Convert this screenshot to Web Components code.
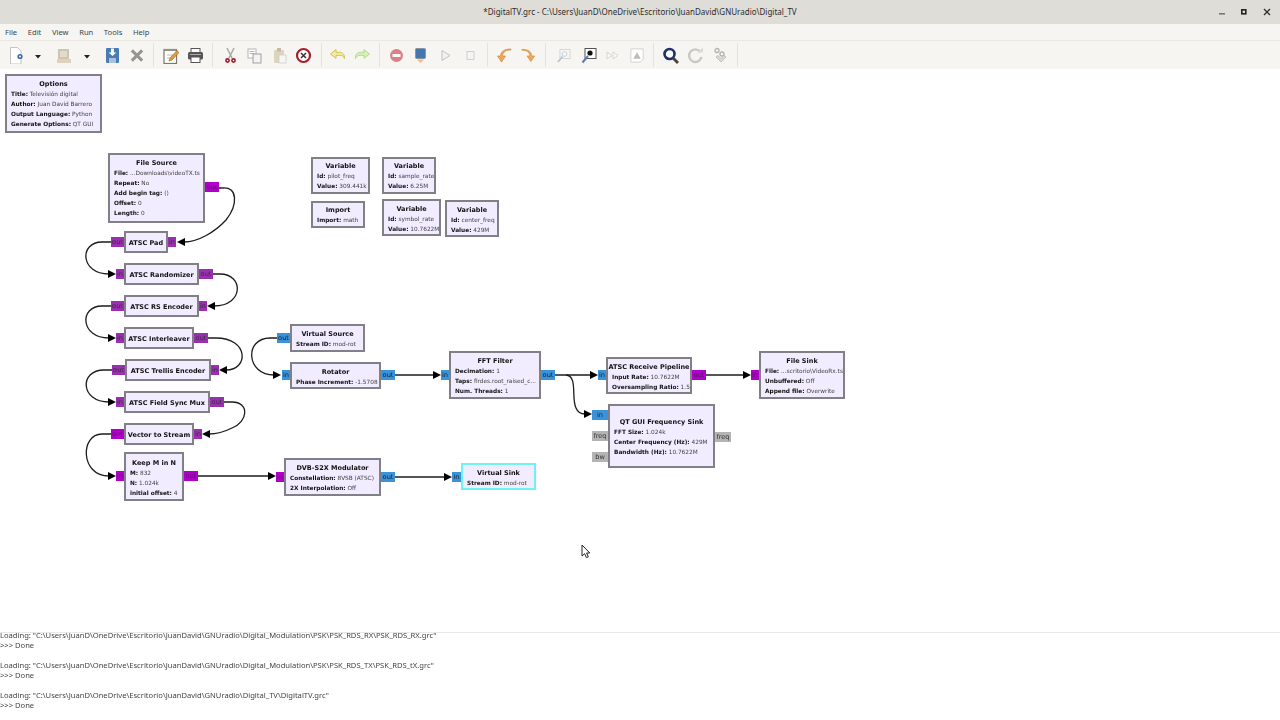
<!DOCTYPE html>
<html>
<head>
<meta charset="utf-8">
<title>DigitalTV.grc</title>
<style>
    html, body { margin: 0; height: 100%; background: #fff; overflow: hidden; }
    body { display: flex; flex-direction: column; width: 1280px; height: 720px; font-family: "Noto Sans", sans-serif; }
</style>
</head>
<body>
<grc-titlebar>*DigitalTV.grc - C:\Users\JuanD\OneDrive\Escritorio\JuanDavid\GNUradio\Digital_TV</grc-titlebar>
<grc-menubar></grc-menubar>
<grc-toolbar></grc-toolbar>
<grc-canvas>
    <grc-block x="5" y="74" w="97" h="59" title="Options" lift>
        <grc-param name="Title">Televisión digital</grc-param>
        <grc-param name="Author">Juan David Barrero</grc-param>
        <grc-param name="Output Language">Python</grc-param>
        <grc-param name="Generate Options">QT GUI</grc-param>
    </grc-block>

    <grc-block x="108" y="153" w="97" h="70" title="File Source" lift>
        <grc-param name="File">...Downloads\videoTX.ts</grc-param>
        <grc-param name="Repeat">No</grc-param>
        <grc-param name="Add begin tag">()</grc-param>
        <grc-param name="Offset">0</grc-param>
        <grc-param name="Length">0</grc-param>
        <grc-port slot="ports" side="right" top="29" w="14" kind="bright">out</grc-port>
    </grc-block>

    <grc-block x="124" y="231" w="44" h="22" title="ATSC Pad">
        <grc-port slot="ports" side="left" top="6" w="13" kind="byte">out</grc-port>
        <grc-port slot="ports" side="right" top="6" w="8" kind="byte">in</grc-port>
    </grc-block>
    <grc-block x="124" y="263" w="75" h="22" title="ATSC Randomizer">
        <grc-port slot="ports" side="left" top="6" w="8" kind="byte">in</grc-port>
        <grc-port slot="ports" side="right" top="6" w="14" kind="byte">out</grc-port>
    </grc-block>
    <grc-block x="124" y="295" w="75" h="22" title="ATSC RS Encoder">
        <grc-port slot="ports" side="left" top="6" w="13" kind="byte">out</grc-port>
        <grc-port slot="ports" side="right" top="6" w="8" kind="byte">in</grc-port>
    </grc-block>
    <grc-block x="124" y="327" w="70" h="22" title="ATSC Interleaver">
        <grc-port slot="ports" side="left" top="6" w="8" kind="byte">in</grc-port>
        <grc-port slot="ports" side="right" top="6" w="14" kind="byte">out</grc-port>
    </grc-block>
    <grc-block x="125" y="359" w="86" h="22" title="ATSC Trellis Encoder">
        <grc-port slot="ports" side="left" top="6" w="13" kind="byte">out</grc-port>
        <grc-port slot="ports" side="right" top="6" w="8" kind="byte">in</grc-port>
    </grc-block>
    <grc-block x="124" y="391" w="86" h="22" title="ATSC Field Sync Mux">
        <grc-port slot="ports" side="left" top="6" w="8" kind="byte">in</grc-port>
        <grc-port slot="ports" side="right" top="6" w="14" kind="byte">out</grc-port>
    </grc-block>
    <grc-block x="124" y="423" w="70" h="22" title="Vector to Stream">
        <grc-port slot="ports" side="left" top="6" w="13" kind="bright">out</grc-port>
        <grc-port slot="ports" side="right" top="6" w="8" kind="byte">in</grc-port>
    </grc-block>
    <grc-block x="124" y="452" w="60" h="49" title="Keep M in N">
        <grc-param name="M">832</grc-param>
        <grc-param name="N">1.024k</grc-param>
        <grc-param name="initial offset">4</grc-param>
        <grc-port slot="ports" side="left" top="19" w="8" kind="bright">in</grc-port>
        <grc-port slot="ports" side="right" top="19" w="14" kind="bright">out</grc-port>
    </grc-block>

    <grc-block x="311" y="157" w="59" h="37" title="Variable" lift>
        <grc-param name="Id">pilot_freq</grc-param>
        <grc-param name="Value">309.441k</grc-param>
    </grc-block>
    <grc-block x="382" y="157" w="54" h="37" title="Variable" lift>
        <grc-param name="Id">sample_rate</grc-param>
        <grc-param name="Value">6.25M</grc-param>
    </grc-block>
    <grc-block x="311" y="201" w="54" h="27" title="Import" lift>
        <grc-param name="Import">math</grc-param>
    </grc-block>
    <grc-block x="382" y="199" w="59" h="37" title="Variable">
        <grc-param name="Id">symbol_rate</grc-param>
        <grc-param name="Value">10.7622M</grc-param>
    </grc-block>
    <grc-block x="445" y="200" w="54" h="37" title="Variable">
        <grc-param name="Id">center_freq</grc-param>
        <grc-param name="Value">429M</grc-param>
    </grc-block>

    <grc-block x="290" y="324" w="75" h="28" title="Virtual Source">
        <grc-param name="Stream ID">mod-rot</grc-param>
        <grc-port slot="ports" side="left" top="9" w="13" kind="complex">out</grc-port>
    </grc-block>
    <grc-block x="290" y="362" w="91" h="27" title="Rotator">
        <grc-param name="Phase Increment">-1.5708</grc-param>
        <grc-port slot="ports" side="left" top="8" w="8" kind="complex">in</grc-port>
        <grc-port slot="ports" side="right" top="8" w="14" kind="complex">out</grc-port>
    </grc-block>
    <grc-block x="449" y="351" w="92" h="48" title="FFT Filter">
        <grc-param name="Decimation">1</grc-param>
        <grc-param name="Taps">firdes.root_raised_c...</grc-param>
        <grc-param name="Num. Threads">1</grc-param>
        <grc-port slot="ports" side="left" top="19" w="8" kind="complex">in</grc-port>
        <grc-port slot="ports" side="right" top="19" w="14" kind="complex">out</grc-port>
    </grc-block>
    <grc-block x="606" y="357" w="86" h="37" title="ATSC Receive Pipeline">
        <grc-param name="Input Rate">10.7622M</grc-param>
        <grc-param name="Oversampling Ratio">1.5</grc-param>
        <grc-port slot="ports" side="left" top="13" w="8" kind="complex">in</grc-port>
        <grc-port slot="ports" side="right" top="13" w="14" kind="bright">out</grc-port>
    </grc-block>
    <grc-block x="759" y="351" w="86" h="48" title="File Sink">
        <grc-param name="File">...scritorio\VideoRx.ts</grc-param>
        <grc-param name="Unbuffered">Off</grc-param>
        <grc-param name="Append file">Overwrite</grc-param>
        <grc-port slot="ports" side="left" top="19" w="8" kind="bright">in</grc-port>
    </grc-block>
    <grc-block x="608" y="404" w="107" h="64" title="QT GUI Frequency Sink">
        <grc-param name="FFT Size">1.024k</grc-param>
        <grc-param name="Center Frequency (Hz)">429M</grc-param>
        <grc-param name="Bandwidth (Hz)">10.7622M</grc-param>
        <grc-port slot="ports" side="left" top="6" w="16" kind="complex">in</grc-port>
        <grc-port slot="ports" side="left" top="27" w="16" kind="msg">freq</grc-port>
        <grc-port slot="ports" side="left" top="48" w="16" kind="msg">bw</grc-port>
        <grc-port slot="ports" side="right" top="28" w="16" kind="msg">freq</grc-port>
    </grc-block>

    <grc-block x="284" y="458" w="97" h="38" title="DVB-S2X Modulator">
        <grc-param name="Constellation">8VSB (ATSC)</grc-param>
        <grc-param name="2X Interpolation">Off</grc-param>
        <grc-port slot="ports" side="left" top="14" w="8" kind="bright">in</grc-port>
        <grc-port slot="ports" side="right" top="14" w="14" kind="complex">out</grc-port>
    </grc-block>
    <grc-block x="461" y="463" w="75" h="27" title="Virtual Sink" selected>
        <grc-param name="Stream ID">mod-rot</grc-param>
        <grc-port slot="ports" side="left" top="9" w="9" kind="complex">in</grc-port>
    </grc-block>

    <grc-wire slot="wires" d="M218 188 H222 C238 186 238 205 226 220 C215 232 198 242 184 242" tip="177,242,left"></grc-wire>
    <grc-wire slot="wires" d="M111 242 H102 C79 242 80 274 109 274" tip="116,274,right"></grc-wire>
    <grc-wire slot="wires" d="M213 274 H220 C244 274 244 306 214 306" tip="207,306,left"></grc-wire>
    <grc-wire slot="wires" d="M111 306 H102 C79 306 80 338 109 338" tip="116,338,right"></grc-wire>
    <grc-wire slot="wires" d="M208 338 H216 C249 338 249 370 226 370" tip="219,370,left"></grc-wire>
    <grc-wire slot="wires" d="M112 370 H104 C79 370 80 402 109 402" tip="116,402,right"></grc-wire>
    <grc-wire slot="wires" d="M224 402 H232 C250 402 248 422 232 428 C224 432 216 434 209 434" tip="202,434,left"></grc-wire>
    <grc-wire slot="wires" d="M111 434 H102 C80 434 80 476 109 476" tip="116,476,right"></grc-wire>
    <grc-wire slot="wires" d="M197 476 H269" tip="276,476,right"></grc-wire>
    <grc-wire slot="wires" d="M395 477 H445" tip="452,477,right"></grc-wire>
    <grc-wire slot="wires" d="M277 338 H270 C244 338 246 375 274 375" tip="281,375,right"></grc-wire>
    <grc-wire slot="wires" d="M395 375 H434" tip="441,375,right"></grc-wire>
    <grc-wire slot="wires" d="M555 375 H591" tip="598,375,right"></grc-wire>
    <grc-wire slot="wires" d="M566 375 C578 376 571 398 576 408 C578 413 582 414 585 414" tip="592,414,right"></grc-wire>
    <grc-wire slot="wires" d="M706 375 H744" tip="751,375,right"></grc-wire>

    <grc-pointer slot="overlay" x="581" y="542"></grc-pointer>
</grc-canvas>
<grc-log>
    <div>Loading: "C:\Users\JuanD\OneDrive\Escritorio\JuanDavid\GNUradio\Digital_Modulation\PSK\PSK_RDS_RX\PSK_RDS_RX.grc"</div>
    <div>&gt;&gt;&gt; Done</div>
    <div>&nbsp;</div>
    <div>Loading: "C:\Users\JuanD\OneDrive\Escritorio\JuanDavid\GNUradio\Digital_Modulation\PSK\PSK_RDS_TX\PSK_RDS_tX.grc"</div>
    <div>&gt;&gt;&gt; Done</div>
    <div>&nbsp;</div>
    <div>Loading: "C:\Users\JuanD\OneDrive\Escritorio\JuanDavid\GNUradio\Digital_TV\DigitalTV.grc"</div>
    <div>&gt;&gt;&gt; Done</div>
    <div>&nbsp;</div>
</grc-log>

<script>
const CANVAS_TOP = 69;

class GrcTitlebar extends HTMLElement {
    constructor() {
        super();
        this.attachShadow({ mode: 'open' });
        this.shadowRoot.innerHTML = `
            <style>
                :host { display: flex; flex: none; height: 24px; background: #dfddd8; align-items: center; color: #2c2c2c; }
                .title { flex: 1; text-align: center; font: 8px "Noto Sans", sans-serif; white-space: nowrap; margin-top: -1px; }
                .controls { display: flex; position: absolute; right: 2px; top: 0; height: 24px; align-items: center; }
                .controls span { width: 22.5px; display: flex; justify-content: center; }
            </style>
            <div class="title"><slot></slot></div>
            <div class="controls">
                <span><svg width="8" height="8" viewBox="0 0 8 8"><rect x="1" y="5" width="6" height="1.6" fill="#777"/></svg></span>
                <span><svg width="8" height="8" viewBox="0 0 8 8"><rect x="1.8" y="1.8" width="4" height="4" fill="none" stroke="#222" stroke-width="1.6"/></svg></span>
                <span><svg width="8" height="8" viewBox="0 0 8 8"><path d="M1 1L7 7M7 1L1 7" stroke="#333" stroke-width="1.4"/></svg></span>
            </div>
        `;
    }
}

class GrcMenubar extends HTMLElement {
    constructor() {
        super();
        this.attachShadow({ mode: 'open' });
        const items = ['File', 'Edit', 'View', 'Run', 'Tools', 'Help'];
        this.shadowRoot.innerHTML = `
            <style>
                :host { display: flex; flex: none; height: 16px; box-sizing: border-box; background: #f6f5f1; padding: 0 0 0 5px; gap: 10.6px; align-items: center; font: 7.6px "Noto Sans", sans-serif; color: #444; }
            </style>
            ${items.map(i => `<span>${i}</span>`).join('')}
        `;
    }
}

const ICONS = {
    drop: '<path d="M5 8h6l-3 3.4z" fill="#222"/>',
    new: '<path d="M3.5 .5h7l3.5 3.5v13h-10.5z" fill="#fff" stroke="#c4c4c4"/><circle cx="13" cy="9.5" r="2.6" fill="#3b67a8"/><circle cx="13" cy="9.5" r="1" fill="#fff"/>',
    open: '<path d="M3 2h11v11h-11z" fill="#cfc4ae"/><path d="M5 4h7v6h-7z" fill="#e2dbcc"/><path d="M2 12h14v4h-14z" fill="#ddd2bd"/>',
    save: '<rect x="2" y="1" width="13" height="15" rx="1" fill="#4a7cb3"/><path d="M7 1.5h3v4h2.4l-3.9 3.5-3.9-3.5h2.400z" fill="#fff"/><rect x="5" y="11" width="7" height="5" fill="#a9c2dc"/>',
    close: '<path d="M3 3L14 14M14 3L3 14" stroke="#96968f" stroke-width="3.2"/>',
    editor: '<rect x="2" y="2.5" width="12.5" height="14" fill="#fff" stroke="#7b786f" stroke-width="1.2"/><rect x="2" y="2" width="12.5" height="2" fill="#95928a"/><path d="M5 8h6M5 11h4" stroke="#bbb"/><path d="M7 14l1-3 7-7.5 2 2-7 7.5z" fill="#e39a3a" stroke="#8a5a1c" stroke-width=".5"/>',
    print: '<rect x="4" y="1.5" width="9" height="4" fill="#fff" stroke="#555"/><rect x="1" y="5" width="15" height="7.5" rx="1.5" fill="#555"/><rect x="4" y="10" width="9" height="5.5" fill="#fff" stroke="#555"/><path d="M3 7.5h11" stroke="#aaa"/>',
    cut: '<path d="M5 1l5 10M12 1l-5 10" stroke="#a9a9a6" stroke-width="1.5"/><circle cx="5.5" cy="13.5" r="2.4" fill="#a21e2c"/><circle cx="11.5" cy="13.5" r="2.4" fill="#a21e2c"/><circle cx="5.5" cy="13.5" r=".8" fill="#fff"/><circle cx="11.5" cy="13.5" r=".8" fill="#fff"/>',
    copy: '<rect x="2" y="2" width="8" height="9" fill="#fff" stroke="#b4b4b4"/><path d="M3.5 4.5h5M3.5 6.5h5" stroke="#bbb"/><rect x="7" y="7" width="8" height="9" fill="#f3f3f3" stroke="#a0a0a0"/>',
    paste: '<rect x="3" y="3" width="10" height="13" rx="1" fill="#ded3bc"/><rect x="6" y="1" width="4" height="3.5" fill="#c6bca5"/><rect x="8" y="8" width="7" height="8" fill="#f6f6f6" stroke="#c9c9c9" stroke-width=".7"/>',
    error: '<circle cx="8.5" cy="8.5" r="6.5" fill="#fff" stroke="#a51d2e" stroke-width="2.2"/><path d="M6 6l5 5M11 6l-5 5" stroke="#333" stroke-width="1.5"/>',
    undo: '<path d="M1.500 7L7 2.500v2.800h3.500c3.500 0 5 2.200 5 6.200-1-2.400-2.500-3.200-5-3.200h-3.500v3z" fill="#f4ec9e" stroke="#d3c056"/>',
    redo: '<path d="M15.500 7L10 2.500v2.800h-3.500c-3.500 0-5 2.200-5 6.200 1-2.400 2.500-3.200 5-3.200h3.500v3z" fill="#d6f2b4" stroke="#aedb92"/>',
    stop: '<circle cx="8.5" cy="8.5" r="6.5" fill="#dc7f89"/><rect x="4.5" y="7" width="8" height="3" fill="#fff"/>',
    gen: '<rect x="3.5" y="1.5" width="10" height="10" rx="1" fill="#4576b0" stroke="#8896a4"/><path d="M5 12.5h7l-3.5 3.5z" fill="#eabd8f"/>',
    exec: '<path d="M5 3.5L13 8.5L5 13.5z" fill="#f2f2f0" stroke="#c0c0bd"/>',
    kill: '<rect x="5" y="4.5" width="7" height="8" fill="#f4f4f2" stroke="#d0d0cd"/>',
    rewind: '<path d="M15 2.500c-5 0-8 1.500-8.500 6h3l-4 6-4-6h3c.5-5 4-7 10.500-7z" transform="translate(1 .5)" fill="#efa75a" stroke="#d58a40" stroke-width=".7"/>',
    forward: '<path d="M2 2.500c5 0 8 1.500 8.500 6h-3l4 6 4-6h-3c-.5-5-4-7-10.500-7z" transform="translate(-1 .5)" fill="#efa75a" stroke="#d58a40" stroke-width=".7"/>',
    findin: '<rect x="5" y="2.500" width="10" height="9" fill="#f7f7f5" stroke="#d6d6d3"/><circle cx="9.500" cy="7" r="2.400" fill="none" stroke="#c2d0df"/><path d="M7.500 9.500L3 15" stroke="#b2c5da" stroke-width="1.800"/>',
    findon: '<rect x="5" y="1.500" width="11" height="10" fill="#fff" stroke="#555"/><circle cx="10" cy="6" r="2.600" fill="#111"/><path d="M8 9L2.500 15.500" stroke="#5a7cae" stroke-width="2"/>',
    next: '<path d="M3 5l5 3.500-5 3.500zM9 5l5 3.500-5 3.500z" fill="#f8f8f6" stroke="#d6d6d3"/>',
    warn: '<path d="M2 1.500h13v11l-3 3h-10z" fill="#fff" stroke="#d0d0cd"/><path d="M8.500 5l4 7h-8z" fill="#bcbcb9"/>',
    search: '<circle cx="7.5" cy="7" r="5" fill="#fff" stroke="#1f2f6f" stroke-width="2.6"/><path d="M11 11l5 5" stroke="#444" stroke-width="2.8"/>',
    reload: '<path d="M13.500 5a6.300 6.300 0 1 0 1 5" fill="none" stroke="#c8c8c5" stroke-width="2.400"/><path d="M10 5.500h6v-5z" fill="#dadad7"/>',
    link: '<circle cx="5" cy="3.500" r="2" fill="none" stroke="#b2b2af" stroke-width="1.300"/><circle cx="10" cy="7" r="2" fill="none" stroke="#b2b2af" stroke-width="1.300"/><path d="M4 10l5 5 5-5-2-1.500-3 3-3-3z" fill="#d8d8d5" stroke="#b2b2af" stroke-width=".7"/>',
};

class GrcToolbar extends HTMLElement {
    constructor() {
        super();
        this.attachShadow({ mode: 'open' });
        // [icon, centre x in the bar]
        const items = [['new', 15], ['drop', 38], ['open', 63], ['drop', 87], ['save', 112], ['close', 137], ['|', 153],
            ['editor', 170], ['print', 195], ['|', 212], ['cut', 230], ['copy', 254], ['paste', 279], ['error', 303], ['|', 321],
            ['undo', 337], ['redo', 362], ['|', 379], ['stop', 396], ['gen', 420], ['exec', 445], ['kill', 470], ['|', 487],
            ['rewind', 503], ['forward', 529], ['|', 545], ['findin', 563], ['findon', 588], ['next', 612], ['warn', 637], ['|', 653],
            ['search', 670], ['reload', 695], ['link', 720], ['|', 737]];
        let left = 0;
        const cells = items.map(([name, c], i) => {
            const next = items[i + 1] ? items[i + 1][1] : c + 10;
            const right = (c + next) / 2;
            const width = right - left;
            const start = left;
            left = right;
            const pad = c - start - width / 2;
            if (name === '|') return `<span style="width:${width}px"><i style="margin-left:${pad * 2}px"></i></span>`;
            return `<span style="width:${width}px"><svg style="margin-left:${pad * 2}px" width="17" height="17" viewBox="0 0 17 17">${ICONS[name]}</svg></span>`;
        }).join('');
        this.shadowRoot.innerHTML = `
            <style>
                :host { display: flex; flex: none; height: 29px; box-sizing: border-box; background: #f6f5f1; border-top: 1px solid #e9e8e3; align-items: center; filter: blur(.4px); }
                span { display: flex; justify-content: center; align-items: center; flex: none; height: 100%; }
                i { display: block; width: 1px; height: 24px; background: #e3e2dd; }
            </style>
            ${cells}
        `;
    }
}

class GrcCanvas extends HTMLElement {
    constructor() {
        super();
        this.attachShadow({ mode: 'open' });
        this.shadowRoot.innerHTML = `
            <style>
                :host { display: block; flex: 1; position: relative; background: #fff; overflow: hidden; filter: blur(.4px); }
            </style>
            <slot name="wires"></slot>
            <slot></slot>
            <slot name="overlay"></slot>
        `;
    }
}

class GrcBlock extends HTMLElement {
    constructor() {
        super();
        this.attachShadow({ mode: 'open' });
        this.shadowRoot.innerHTML = `
            <style>
                :host { display: flex; flex-direction: column; justify-content: center; position: absolute; box-sizing: border-box; background: #f1ecff; border: 2px solid #808086; color: #111; padding: 2px 4px 0; }
                :host([lift]) { padding-top: 0; }
                :host([selected]) { border-color: #6ff2f2; }
                .title { text-align: center; font: bold 6.5px/10px "DejaVu Sans", sans-serif; white-space: nowrap; margin: 0 -6px; }
            </style>
            <div class="title"></div>
            <slot></slot>
            <slot name="ports"></slot>
        `;
    }

    connectedCallback() {
        const n = a => this.getAttribute(a);
        this.style.left = n('x') + 'px';
        this.style.top = (n('y') - CANVAS_TOP) + 'px';
        this.style.width = n('w') + 'px';
        this.style.height = n('h') + 'px';
        this.shadowRoot.querySelector('.title').textContent = n('title');
    }
}

class GrcParam extends HTMLElement {
    constructor() {
        super();
        this.attachShadow({ mode: 'open' });
        this.shadowRoot.innerHTML = `
            <style>
                :host { display: block; font: 5.8px/10px "DejaVu Sans", sans-serif; color: #444; white-space: nowrap; }
                b { color: #111; }
            </style>
            <b></b> <slot></slot>
        `;
    }

    connectedCallback() {
        this.shadowRoot.querySelector('b').textContent = this.getAttribute('name') + ':';
    }
}

class GrcPort extends HTMLElement {
    constructor() {
        super();
        this.attachShadow({ mode: 'open' });
        this.shadowRoot.innerHTML = `
            <style>
                :host { display: block; position: absolute; height: 10px; box-sizing: border-box; font: 6.6px/10px "DejaVu Sans", sans-serif; text-align: center; overflow: hidden; color: #333; background: #9a2fb0; }
                :host([kind="bright"]) { background: #b000c8; color: #5a1070; }
                :host([kind="complex"]) { background: #3a93d8; color: #123; }
                :host([kind="msg"]) { background: #b4b4b4; color: #333; }
            </style>
            <slot></slot>
        `;
    }

    connectedCallback() {
        const w = +this.getAttribute('w');
        const outside = -(w + 2);
        this.style.width = w + 'px';
        this.style.top = (this.getAttribute('top') - 2) + 'px';
        this.style[this.getAttribute('side')] = outside + 'px';
    }
}

class GrcWire extends HTMLElement {
    constructor() {
        super();
        this.attachShadow({ mode: 'open' });
    }

    connectedCallback() {
        const [tx, ty, dir] = this.getAttribute('tip').split(',');
        const x = +tx, y = +ty - CANVAS_TOP;
        const back = dir === 'left' ? x + 8 : x - 8;
        this.shadowRoot.innerHTML = `
            <style>
                :host { display: block; position: absolute; inset: 0; pointer-events: none; }
                svg { position: absolute; left: 0; top: 0; overflow: visible; }
            </style>
            <svg width="1280" height="563" viewBox="0 ${CANVAS_TOP} 1280 563">
                <path d="${this.getAttribute('d')}" fill="none" stroke="#1c1c1c" stroke-width="1.3"/>
            </svg>
            <svg width="1280" height="563" viewBox="0 0 1280 563">
                <path d="M${x} ${y}L${back} ${y - 4}V${y + 4}z" fill="#000"/>
            </svg>
        `;
    }
}

class GrcPointer extends HTMLElement {
    constructor() {
        super();
        this.attachShadow({ mode: 'open' });
        this.shadowRoot.innerHTML = `
            <style>
                :host { display: block; position: absolute; width: 11px; height: 15px; }
            </style>
            <svg width="11" height="15" viewBox="0 0 11 15">
                <path d="M1 1V12L3.6 9.7L5.4 13.6L7.3 12.8L5.6 9H8.8z" fill="#fff" stroke="#222"/>
            </svg>
        `;
    }

    connectedCallback() {
        this.style.left = this.getAttribute('x') + 'px';
        this.style.top = (this.getAttribute('y') - CANVAS_TOP) + 'px';
    }
}

class GrcLog extends HTMLElement {
    constructor() {
        super();
        this.attachShadow({ mode: 'open' });
        this.shadowRoot.innerHTML = `
            <style>
                :host { display: flex; flex: none; flex-direction: column; justify-content: flex-end; height: 88px; box-sizing: border-box; overflow: hidden; background: #fff; border-top: 1px solid #e8e8e6; font: 7.6px/10px "Noto Sans", sans-serif; color: #444; white-space: nowrap; filter: blur(.25px); }
            </style>
            <slot></slot>
        `;
    }
}

customElements.define('grc-titlebar', GrcTitlebar);
customElements.define('grc-menubar', GrcMenubar);
customElements.define('grc-toolbar', GrcToolbar);
customElements.define('grc-canvas', GrcCanvas);
customElements.define('grc-block', GrcBlock);
customElements.define('grc-param', GrcParam);
customElements.define('grc-port', GrcPort);
customElements.define('grc-wire', GrcWire);
customElements.define('grc-pointer', GrcPointer);
customElements.define('grc-log', GrcLog);
</script>
</body>
</html>
